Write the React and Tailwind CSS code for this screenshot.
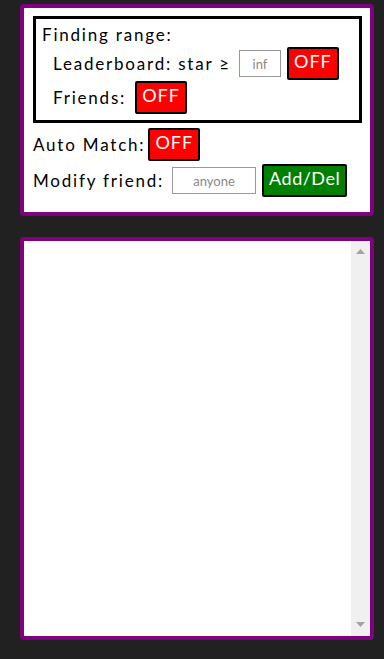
import React from 'react';

const font = { fontFamily: 'Lato, "Liberation Sans", sans-serif' };

const OffButton = ({ label = 'OFF', green = false }) => (
  <button
    className={
      'h-[33px] px-[5px] pb-[6px] border-2 border-black rounded-[2px] text-white text-[18px] leading-[22px] ' +
      (green ? 'bg-[#008000] tracking-[0.5px]' : 'bg-[#ff0000] tracking-[1px]')
    }
  >
    {label}
  </button>
);

export default function App() {
  return (
    <div className="min-h-screen bg-[#212121] pt-[4px] pl-[20px] pr-[10px] pb-[19px] text-black text-[17px] tracking-[1.8px]" style={font}>
      {/* Settings panel */}
      <div className="w-[354px] border-4 border-[#800080] rounded-[4px] bg-white pt-[8px] pl-[9px] pr-[8px] pb-[15px]">
        <div className="border-[3px] border-black pt-[4px] pl-[6px] pb-[6px] flex flex-col">
          <div className="h-[24px] leading-[24px]">Finding range:</div>
          <div className="flex items-center h-[33px] pl-[11px]">
            <span>Leaderboard: star ≥</span>
            <input
              className="ml-[8px] w-[42px] h-[27px] border border-[#999] text-center text-[13px] tracking-normal outline-none placeholder:text-[#888]"
              placeholder="inf"
            />
            <span className="ml-[6px]">
              <OffButton />
            </span>
          </div>
          <div className="flex items-center h-[33px] pl-[11px] mt-[1px]">
            <span>Friends:</span>
            <span className="ml-[9px]">
              <OffButton />
            </span>
          </div>
        </div>

        <div className="flex items-center h-[33px] mt-[5px]">
          <span>Auto Match:</span>
          <span className="ml-[3px]">
            <OffButton />
          </span>
        </div>
        <div className="flex items-center h-[33px] mt-[3px]">
          <span>Modify friend:</span>
          <input
            className="ml-[8px] w-[84px] h-[27px] border border-[#999] text-center text-[13px] tracking-normal outline-none placeholder:text-[#888]"
            placeholder="anyone"
          />
          <span className="ml-[6px]">
            <OffButton label="Add/Del" green />
          </span>
        </div>
      </div>

      {/* Log panel */}
      <div className="mt-[21px] w-[354px] h-[403px] border-4 border-[#800080] rounded-[4px] bg-white flex">
        <div className="flex-1" />
        <div className="w-[19px] bg-[#f0f0f0] flex flex-col items-center justify-between py-[8px]">
          <svg width="9" height="6" viewBox="0 0 9 6">
            <polygon points="4.5,0 9,5 0,5" fill="#a3a3a3" />
          </svg>
          <svg width="9" height="6" viewBox="0 0 9 6">
            <polygon points="0,0 9,0 4.5,5" fill="#a3a3a3" />
          </svg>
        </div>
      </div>
    </div>
  );
}
